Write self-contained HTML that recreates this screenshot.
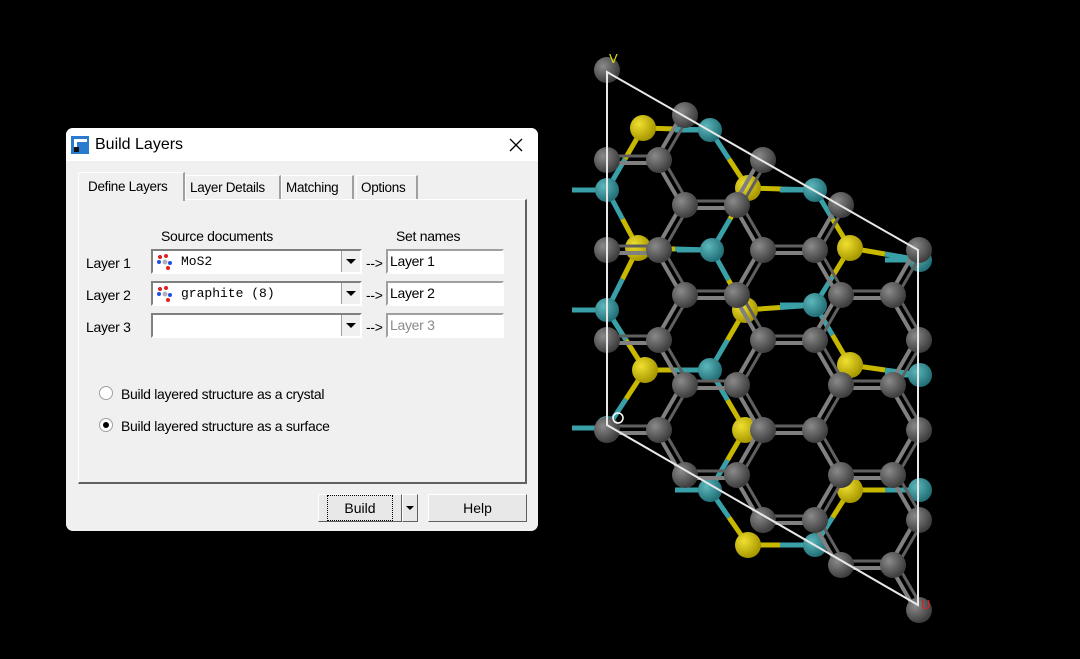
<!DOCTYPE html>
<html><head><meta charset="utf-8"><style>
body{margin:0;width:1080px;height:659px;background:#000;position:relative;overflow:hidden;font-family:"Liberation Sans",sans-serif;font-size:14px;color:#000}
.a{position:absolute}
#dlg{left:66px;top:128px;width:472px;height:403px;background:#f0f0f0;border-radius:7px;overflow:hidden}
#tb{left:0;top:0;width:472px;height:33px;background:#fff}
.tab{position:absolute;top:175px;height:24px;background:#f0f0f0;border:1px solid #fff;border-right:2px solid #a0a0a0;border-bottom:none;line-height:24px;font-size:13.5px;padding:0 4px;box-sizing:border-box;white-space:nowrap;letter-spacing:-0.3px;overflow:hidden}
.combo{position:absolute;left:151px;width:211px;height:25px;background:#fff;border:2px solid;border-color:#808080 #fff #fff #808080;box-sizing:border-box}
.combo .btn{position:absolute;right:0;top:0;width:18px;height:21px;background:#f0f0f0;border-left:1px solid #a0a0a0}
.combo .btn:after{content:"";position:absolute;left:4px;top:8px;border:5px solid transparent;border-top:5px solid #000;border-bottom:none}
.edit{position:absolute;left:386px;width:118px;height:25px;background:#fff;border:2px solid;border-color:#a0a0a0 #fff #fff #a0a0a0;box-sizing:border-box;line-height:21px;padding-left:2px;font-size:14px;letter-spacing:-0.3px}
.lbl{position:absolute;font-size:14px;white-space:nowrap;letter-spacing:-0.3px}
.mono{font-family:"Liberation Mono",monospace;font-size:13px;position:absolute;left:28px;top:3px;white-space:pre}
.ic{position:absolute;left:3px;top:2px;width:20px;height:18px}
.radio{position:absolute;left:99px;width:12px;height:12px;border-radius:50%;background:#fff;border:1px solid #a0a0a0}
.pb{position:absolute;top:494px;height:28px;background:#e8e8e8;border:1px solid;border-color:#fff #606060 #606060 #fff;box-sizing:border-box;text-align:center;line-height:26px;font-size:14px}
</style></head><body>
<svg class="a" style="left:0;top:0" width="1080" height="659" id="mol">
<defs>
<radialGradient id="gg" cx="35%" cy="35%" r="65%"><stop offset="0" stop-color="#8a8a8a"/><stop offset="1" stop-color="#3e3e3e"/></radialGradient>
<radialGradient id="gy" cx="35%" cy="35%" r="65%"><stop offset="0" stop-color="#f0e030"/><stop offset="1" stop-color="#a89800"/></radialGradient>
<radialGradient id="gt" cx="35%" cy="35%" r="65%"><stop offset="0" stop-color="#5cb8bc"/><stop offset="1" stop-color="#237078"/></radialGradient>
</defs>
<g id="under"></g><g id="bonds"></g><g id="atoms"></g>
<polygon points="607,72 918,250 918,605 607,425" fill="none" stroke="#e8e8e8" stroke-width="2"/>
<text x="609" y="63" fill="#e0e000" font-size="13" font-family="Liberation Sans,sans-serif">V</text>
<text x="921" y="609" fill="#e02020" font-size="13" font-family="Liberation Sans,sans-serif">U</text>
<circle cx="618" cy="418" r="5" fill="none" stroke="#fff" stroke-width="1.5"/>
</svg>
<script>
(function(){
var ns="http://www.w3.org/2000/svg";
function el(p,t,a){var e=document.createElementNS(ns,t);for(var k in a)e.setAttribute(k,a[k]);document.getElementById(p).appendChild(e);return e;}
function inside(x,y,m){if(x<607-m||x>918+m)return false;var t=(x-607)/311;var top=72+178*t,bot=425+180*t;return y>top-m&&y<bot+m;}
var atoms=[];
for(var r=0;r<14;r++){var y=70+45*r;var base=(r%2==0)?607:685;
 for(var n=-2;n<4;n++){[base+156*n,base+52+156*n].forEach(function(x){if(inside(x,y,14))atoms.push([x,y]);});}}
var yl=[[643,128],[748,188],[850,248],[638,248],[645,370],[745,310],[850,365],[745,430],[850,490],[748,545]];
var tl=[[710,130],[815,190],[607,190],[712,250],[815,305],[607,310],[710,370],[920,375],[920,490],[710,490],[815,545],[920,260],[607,428]];
tl.forEach(function(a){yl.forEach(function(b){var d=Math.hypot(a[0]-b[0],a[1]-b[1]);if(d<125&&d>40){el("under","line",{x1:a[0],y1:a[1],x2:(a[0]+b[0])/2,y2:(a[1]+b[1])/2,stroke:"#3aa0a8","stroke-width":5});el("under","line",{x1:b[0],y1:b[1],x2:(a[0]+b[0])/2,y2:(a[1]+b[1])/2,stroke:"#c8b800","stroke-width":5});}});
 el("under","line",{x1:a[0]-35,y1:a[1],x2:a[0],y2:a[1],stroke:"#3aa0a8","stroke-width":5});});
yl.forEach(function(a){el("under","circle",{cx:a[0],cy:a[1],r:13,fill:"url(#gy)"});});
tl.forEach(function(a){el("under","circle",{cx:a[0],cy:a[1],r:12,fill:"url(#gt)"});});
for(var i=0;i<atoms.length;i++)for(var j=i+1;j<atoms.length;j++){var a=atoms[i],b=atoms[j];var d=Math.hypot(a[0]-b[0],a[1]-b[1]);if(d<56){
 var dx=(b[0]-a[0])/d,dy=(b[1]-a[1])/d;
 el("bonds","line",{x1:a[0]-dy*3,y1:a[1]+dx*3,x2:b[0]-dy*3,y2:b[1]+dx*3,stroke:"#808080","stroke-width":4});
 el("bonds","line",{x1:a[0]+dy*4,y1:a[1]-dx*4,x2:b[0]+dy*4,y2:b[1]-dx*4,stroke:"#606060","stroke-width":3});}}
atoms.forEach(function(a){el("atoms","circle",{cx:a[0],cy:a[1],r:13,fill:"url(#gg)"});});
})();
</script>

<div id="dlg" class="a">
<div id="tb" class="a"></div>
<svg class="a" style="left:5px;top:8px" width="18" height="18"><rect x="0" y="0" width="18" height="18" fill="#2a7ad0"/><rect x="3" y="3" width="13" height="13" fill="#fff"/><rect x="6" y="6" width="10" height="10" fill="#2a7ad0"/><rect x="3" y="11" width="5" height="5" fill="#111"/></svg>
<div class="a" style="left:29px;top:8px;font-size:16px">Build Layers</div>
<svg class="a" style="left:443px;top:10px" width="14" height="14"><path d="M1 1L13 13M13 1L1 13" stroke="#000" stroke-width="1.3"/></svg>
</div>
<div class="a" style="left:78px;top:199px;width:449px;height:285px;border:1px solid;border-color:#fff #606060 #606060 #fff;box-sizing:border-box;border-width:1px 2px 2px 1px"></div>
<div class="tab" style="left:78px;top:172px;width:107px;height:29px;line-height:28px;z-index:2;padding-left:9px">Define Layers</div>
<div class="tab" style="left:185px;width:96px">Layer Details</div>
<div class="tab" style="left:281px;width:73px">Matching</div>
<div class="tab" style="left:356px;width:62px">Options</div>
<div class="lbl" style="left:161px;top:228px">Source documents</div>
<div class="lbl" style="left:396px;top:228px">Set names</div>
<div class="lbl" style="left:86px;top:255px">Layer 1</div>
<div class="lbl" style="left:86px;top:287px">Layer 2</div>
<div class="lbl" style="left:86px;top:319px">Layer 3</div>
<div class="combo" style="top:249px"><svg class="ic" viewBox="0 0 20 18"><circle cx="4" cy="4" r="2" fill="#e02020"/><circle cx="10" cy="3" r="2" fill="#e02020"/><circle cx="3" cy="9" r="2" fill="#2050e0"/><circle cx="9" cy="9" r="2.5" fill="#b0b0c0"/><circle cx="14" cy="10" r="2" fill="#2050e0"/><circle cx="12" cy="15" r="2" fill="#e02020"/></svg><span class="mono">MoS2</span><div class="btn"></div></div>
<div class="combo" style="top:281px"><svg class="ic" viewBox="0 0 20 18"><circle cx="4" cy="4" r="2" fill="#e02020"/><circle cx="10" cy="3" r="2" fill="#e02020"/><circle cx="3" cy="9" r="2" fill="#2050e0"/><circle cx="9" cy="9" r="2.5" fill="#b0b0c0"/><circle cx="14" cy="10" r="2" fill="#2050e0"/><circle cx="12" cy="15" r="2" fill="#e02020"/></svg><span class="mono">graphite (8)</span><div class="btn"></div></div>
<div class="combo" style="top:313px"><div class="btn"></div></div>
<div class="lbl" style="left:366px;top:255px">--&gt;</div>
<div class="lbl" style="left:366px;top:287px">--&gt;</div>
<div class="lbl" style="left:366px;top:319px">--&gt;</div>
<div class="edit" style="top:249px">Layer 1</div>
<div class="edit" style="top:281px">Layer 2</div>
<div class="edit" style="top:313px;color:#8a8a8a">Layer 3</div>
<div class="radio" style="top:386px"></div>
<div class="radio" style="top:418px"><div style="position:absolute;left:3px;top:3px;width:6px;height:6px;border-radius:50%;background:#000"></div></div>
<div class="lbl" style="left:121px;top:386px">Build layered structure as a crystal</div>
<div class="lbl" style="left:121px;top:418px">Build layered structure as a surface</div>
<div class="pb" style="left:318px;width:84px"><span style="outline:1px dotted #000;outline-offset:4px;padding:0 12px">Build</span></div>
<div class="pb" style="left:402px;width:16px"><div style="position:absolute;left:3px;top:11px;border:4px solid transparent;border-top:4px solid #000;border-bottom:none"></div></div>
<div class="pb" style="left:428px;width:99px">Help</div>
</body></html>
